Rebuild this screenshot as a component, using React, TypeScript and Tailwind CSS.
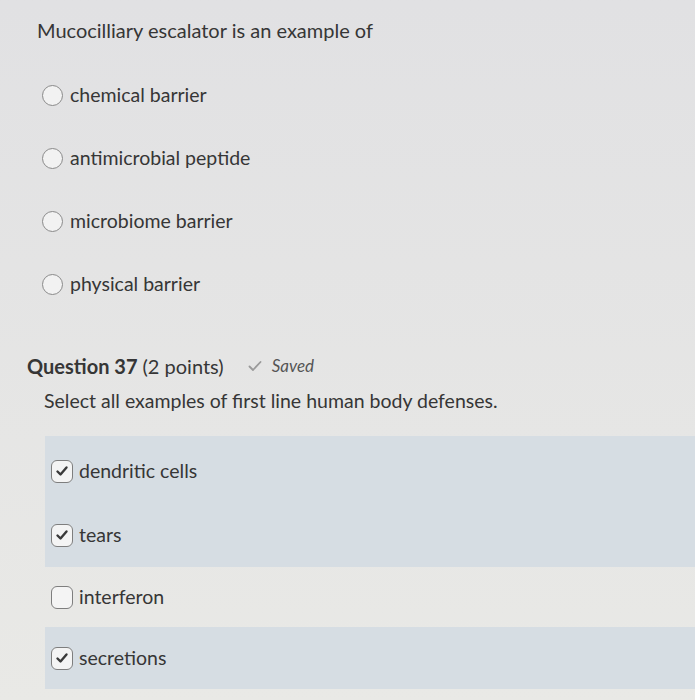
import React from "react";

const RADIOS = ["chemical barrier", "antimicrobial peptide", "microbiome barrier", "physical barrier"];

const CHECKS = [
  { label: "dendritic cells", checked: true },
  { label: "tears", checked: true },
  { label: "interferon", checked: false },
  { label: "secretions", checked: true },
];

function Radio() {
  return <span className="inline-block h-[21px] w-[21px] shrink-0 rounded-full border border-[#8a8a8a] bg-[#f2f2f2]" />;
}

function Box({ checked }: { checked: boolean }) {
  return (
    <span className="flex h-[23px] w-[22px] shrink-0 items-center justify-center rounded-[6px] border border-[#7e7e7e] bg-[#f4f4f4]">
      {checked && (
        <svg width="14" height="14" viewBox="0 0 14 14" fill="none">
          <path d="M2.5 7.5 L5.5 10.5 L11.5 3.5" stroke="#3a3a3a" strokeWidth="2.4" strokeLinecap="round" strokeLinejoin="round" />
        </svg>
      )}
    </span>
  );
}

export default function App() {
  return (
    <div className="min-h-[700px] w-[695px] bg-gradient-to-b from-[#e1e1e3] to-[#e9e9e6] text-[#363636] font-['Lato','Open_Sans',sans-serif]">
      <div className="pl-[37px] pt-[16px]">
        <h1 className="text-[20px] leading-[28px]">Mucocilliary escalator is an example of</h1>
        <div className="mt-[40px] flex flex-col gap-[41px] pl-[5px]">
          {RADIOS.map((r) => (
            <div key={r} className="flex h-[22px] items-center gap-[7px] text-[19.5px]">
              <Radio />
              <span>{r}</span>
            </div>
          ))}
        </div>
      </div>

      <div className="mt-[57px] flex h-[28px] items-center pl-[27px] text-[20px]">
        <span className="font-bold">Question 37</span>
        <span className="ml-[5px]">(2 points)</span>
        <svg className="ml-[24px]" width="14" height="12" viewBox="0 0 14 12" fill="none">
          <path d="M1.5 6.5 L5 10 L12.5 2" stroke="#9a9a9a" strokeWidth="1.8" strokeLinecap="round" strokeLinejoin="round" />
        </svg>
        <span className="ml-[10px] text-[17px] italic text-[#555]">Saved</span>
      </div>
      <p className="mt-[7px] pl-[44px] text-[19.5px] leading-[28px]">Select all examples of first line human body defenses.</p>

      <div className="mt-[21px] ml-[45px] flex flex-col text-[19.5px]">
        <div className="bg-[#d6dde3] pt-[3px]">
          {CHECKS.slice(0, 2).map((c) => (
            <div key={c.label} className="flex h-[64px] items-center gap-[6px] pl-[6px]">
              <Box checked={c.checked} />
              <span>{c.label}</span>
            </div>
          ))}
        </div>
        <div className="flex h-[60px] items-center gap-[6px] pl-[6px]">
          <Box checked={CHECKS[2].checked} />
          <span>{CHECKS[2].label}</span>
        </div>
        <div className="flex h-[62px] items-center gap-[6px] bg-[#d6dde3] pl-[6px]">
          <Box checked={CHECKS[3].checked} />
          <span>{CHECKS[3].label}</span>
        </div>
      </div>
    </div>
  );
}
